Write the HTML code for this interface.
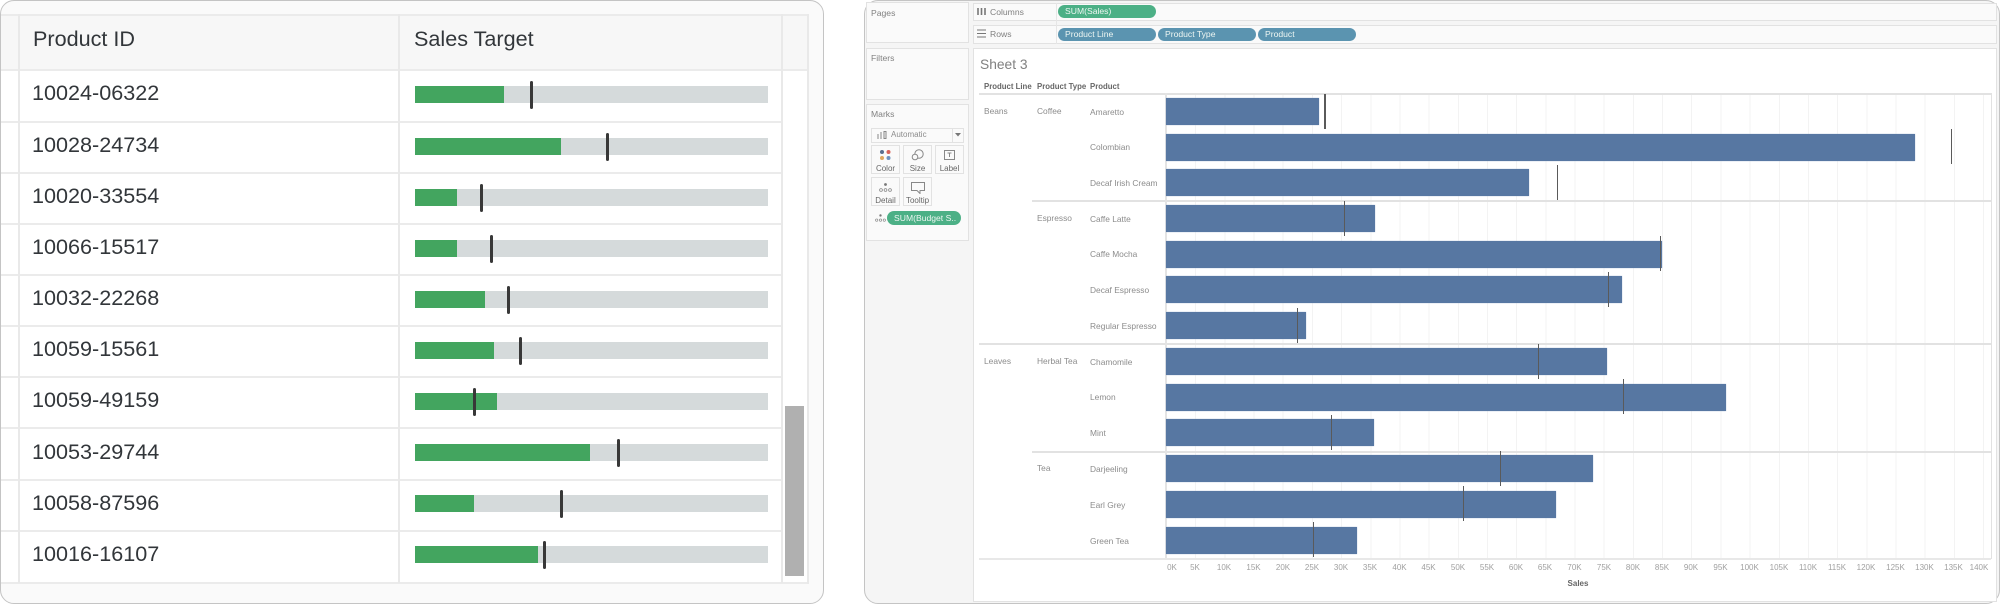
<!DOCTYPE html>
<html><head><meta charset="utf-8"><title>Bullet charts</title>
<style>
html,body{margin:0;padding:0;background:#fff}
#p{position:relative;width:2000px;height:604px;overflow:hidden;background:#fff;font-family:"Liberation Sans",sans-serif}
#p div{position:absolute;box-sizing:border-box;white-space:nowrap}
#p svg{position:absolute}
.h{height:2px;background:#ebebeb}
.v{width:2px;background:#e9e9e9}
.id{left:32px;width:200px;height:30px;line-height:30px;font-size:21.6px;color:#32363a}
.tr{left:415px;width:353px;height:17px;background:#d5dadb}
.g{left:415px;height:17px;background:#43a55f}
.m{width:3px;height:28px;background:#383838;border-radius:1.5px}
.box{background:#fafafa;border:1px solid #e2e2e2}
.lb{font-size:8.6px;color:#808080;height:12px;line-height:12px}
.pill{height:13px;line-height:13px;border-radius:7px;color:#eef6f2;font-size:8.6px;padding-left:7px;overflow:hidden}
.pb{background:#5b94b0;top:28px;width:98px}
.card{background:#fafafa;border:1px solid #e2e2e2;width:29px;height:29px}
.ct{left:0;width:100%;text-align:center;font-size:8px;color:#666;top:17px;height:11px;line-height:11px}
.c{font-size:8.4px;color:#8c8c8c;height:12px;line-height:12px}
.b{left:1166px;height:27px;background:#5777a2;box-shadow:0 0 1px #9fb3cf}
.k{width:1.5px;height:35px;background:#5a5a5a}
.ch{font-size:7.8px;font-weight:bold;color:#666;height:12px;line-height:12px;top:81px}
.x{top:562px;width:40px;text-align:center;font-size:8px;color:#a0a0a0;height:12px;line-height:12px}
.l{height:1.5px;background:#e2e2e2}
</style></head><body><div id="p">

<!-- LEFT PANEL -->
<div style="left:0;top:0;width:824px;height:604px;background:#fafafa;border:1px solid #c4c4c4;border-radius:14px"></div>
<div style="left:1px;top:14px;width:808px;height:56px;background:#f7f7f7"></div>
<div style="left:1px;top:70px;width:808px;height:514px;background:#fff"></div>
<div class="h" style="left:1px;top:14px;width:808px"></div>
<div class="h" style="left:1px;top:69px;width:808px"></div>
<div class="h" style="left:1px;top:120.5px;width:780px"></div>
<div class="h" style="left:1px;top:171.5px;width:780px"></div>
<div class="h" style="left:1px;top:222.5px;width:780px"></div>
<div class="h" style="left:1px;top:274px;width:780px"></div>
<div class="h" style="left:1px;top:325px;width:780px"></div>
<div class="h" style="left:1px;top:376px;width:780px"></div>
<div class="h" style="left:1px;top:427px;width:780px"></div>
<div class="h" style="left:1px;top:478.5px;width:780px"></div>
<div class="h" style="left:1px;top:529.5px;width:780px"></div>
<div class="h" style="left:1px;top:582px;width:808px"></div>
<div class="v" style="left:18px;top:14px;height:569px"></div>
<div class="v" style="left:398px;top:14px;height:569px"></div>
<div class="v" style="left:780.5px;top:14px;height:569px"></div>
<div class="v" style="left:807px;top:14px;height:570px"></div>
<div style="left:785px;top:406px;width:19px;height:170px;background:#b0b0b0"></div>

<div style="left:33px;top:24px;height:30px;line-height:30px;font-size:21.6px;color:#32363a">Product ID</div>
<div style="left:414px;top:24px;height:30px;line-height:30px;font-size:21.6px;color:#32363a">Sales Target</div>

<div class="id" style="top:78px">10024-06322</div>
<div class="id" style="top:129.5px">10028-24734</div>
<div class="id" style="top:180.5px">10020-33554</div>
<div class="id" style="top:231.5px">10066-15517</div>
<div class="id" style="top:283px">10032-22268</div>
<div class="id" style="top:334px">10059-15561</div>
<div class="id" style="top:385px">10059-49159</div>
<div class="id" style="top:436.5px">10053-29744</div>
<div class="id" style="top:487.5px">10058-87596</div>
<div class="id" style="top:538.5px">10016-16107</div>

<div class="tr" style="top:86px"></div><div class="g" style="top:86px;width:89px"></div><div class="m" style="left:530px;top:81px"></div>
<div class="tr" style="top:137.5px"></div><div class="g" style="top:137.5px;width:146px"></div><div class="m" style="left:606px;top:132.5px"></div>
<div class="tr" style="top:189px"></div><div class="g" style="top:189px;width:42px"></div><div class="m" style="left:480px;top:184px"></div>
<div class="tr" style="top:240px"></div><div class="g" style="top:240px;width:42px"></div><div class="m" style="left:490px;top:235px"></div>
<div class="tr" style="top:291px"></div><div class="g" style="top:291px;width:70px"></div><div class="m" style="left:507px;top:286px"></div>
<div class="tr" style="top:342px"></div><div class="g" style="top:342px;width:79px"></div><div class="m" style="left:519px;top:337px"></div>
<div class="tr" style="top:393px"></div><div class="g" style="top:393px;width:82px"></div><div class="m" style="left:472.5px;top:388px"></div>
<div class="tr" style="top:444px"></div><div class="g" style="top:444px;width:175px"></div><div class="m" style="left:616.5px;top:439px"></div>
<div class="tr" style="top:495px"></div><div class="g" style="top:495px;width:59px"></div><div class="m" style="left:559.5px;top:490px"></div>
<div class="tr" style="top:546px"></div><div class="g" style="top:546px;width:123px"></div><div class="m" style="left:542.5px;top:541px"></div>

<!-- RIGHT PANEL -->
<div style="left:864px;top:0;width:1136px;height:604px;background:#f5f5f5;border:1px solid #c4c4c4;border-radius:14px"></div>
<div class="box" style="left:866px;top:2px;width:103px;height:41px"></div>
<div class="lb" style="left:871px;top:6.5px">Pages</div>
<div class="box" style="left:866px;top:48px;width:103px;height:52px"></div>
<div class="lb" style="left:871px;top:52px">Filters</div>
<div class="box" style="left:866px;top:104px;width:103px;height:137px"></div>
<div class="lb" style="left:871px;top:108px">Marks</div>

<div class="box" style="left:973px;top:3px;width:1024px;height:18px"></div>
<div class="box" style="left:973px;top:25px;width:1024px;height:19px"></div>
<div style="left:1056px;top:3px;width:1px;height:41px;background:#e6e6e6"></div>
<svg style="left:977px;top:7px" width="9" height="9" viewBox="0 0 9 9"><path d="M1 1v7M4.5 1v7M8 1v7" stroke="#777" stroke-width="1.6" fill="none"/></svg>
<svg style="left:977px;top:29px" width="9" height="9" viewBox="0 0 9 9"><path d="M0 1h9M0 4.5h9M0 8h9" stroke="#777" stroke-width="1.1" fill="none"/></svg>
<div class="lb" style="left:990px;top:6px">Columns</div>
<div class="lb" style="left:990px;top:28px">Rows</div>
<div class="pill" style="left:1058px;top:5px;width:98px;background:#4cb086">SUM(Sales)</div>
<div class="pill pb" style="left:1058px">Product Line</div>
<div class="pill pb" style="left:1158px">Product Type</div>
<div class="pill pb" style="left:1258px">Product</div>

<!-- Marks card -->
<div style="left:871px;top:127.5px;width:93px;height:15px;background:#fafafa;border:1px solid #e2e2e2"></div>
<div style="left:952px;top:128px;width:1px;height:14px;background:#e2e2e2"></div>
<svg style="left:877px;top:131px" width="10" height="8" viewBox="0 0 10 8"><path d="M1 3v5M4 1v7M7 0.5h2v7H7z" stroke="#888" stroke-width="1" fill="none"/></svg>
<div class="lb" style="left:891px;top:129px;color:#8c8c8c;font-size:8px">Automatic</div>
<svg style="left:955px;top:133px" width="6" height="4" viewBox="0 0 6 4"><path d="M0 0h6L3 3.5z" fill="#777"/></svg>

<div class="card" style="left:871px;top:145px"><div class="ct">Color</div></div>
<svg style="left:879px;top:149px" width="13" height="12" viewBox="0 0 13 12"><circle cx="3" cy="3" r="2" fill="#5a6f8f"/><circle cx="9.5" cy="3" r="2" fill="#d9635a"/><circle cx="3" cy="9" r="2" fill="#e0a860"/><circle cx="9.5" cy="9" r="2" fill="#6f93c0"/></svg>
<div class="card" style="left:903px;top:145px"><div class="ct">Size</div></div>
<svg style="left:911px;top:149px" width="14" height="12" viewBox="0 0 14 12"><circle cx="8" cy="5" r="4.2" fill="none" stroke="#888"/><circle cx="4" cy="8" r="2.8" fill="#fafafa" stroke="#888"/></svg>
<div class="card" style="left:935px;top:145px"><div class="ct">Label</div></div>
<svg style="left:944px;top:150px" width="11" height="10" viewBox="0 0 11 10"><rect x=".5" y=".5" width="10" height="9" fill="none" stroke="#888"/><path d="M3.5 3h4M5.5 3v4" stroke="#888" fill="none"/></svg>
<div class="card" style="left:871px;top:177px"><div class="ct">Detail</div></div>
<svg style="left:879px;top:183px" width="13" height="9" viewBox="0 0 13 9"><circle cx="6.5" cy="1.5" r="1.4" fill="#777"/><circle cx="2" cy="7" r="1.4" fill="none" stroke="#888" stroke-width=".8"/><circle cx="6.5" cy="7" r="1.4" fill="none" stroke="#888" stroke-width=".8"/><circle cx="11" cy="7" r="1.4" fill="none" stroke="#888" stroke-width=".8"/></svg>
<div class="card" style="left:903px;top:177px"><div class="ct">Tooltip</div></div>
<svg style="left:911px;top:182px" width="14" height="12" viewBox="0 0 14 12"><path d="M.5.5h13v8H9v3l-3-3H.5z" fill="none" stroke="#888"/></svg>
<svg style="left:875px;top:214px" width="11" height="8" viewBox="0 0 13 9"><circle cx="6.5" cy="1.5" r="1.4" fill="#777"/><circle cx="2" cy="7" r="1.4" fill="none" stroke="#888" stroke-width=".8"/><circle cx="6.5" cy="7" r="1.4" fill="none" stroke="#888" stroke-width=".8"/><circle cx="11" cy="7" r="1.4" fill="none" stroke="#888" stroke-width=".8"/></svg>
<div class="pill" style="left:887px;top:211px;width:74px;height:14px;line-height:14px;background:#4cb086">SUM(Budget S..</div>

<!-- Chart -->
<div style="left:973px;top:48px;width:1024px;height:554px;background:#fff;border:1px solid #e2e2e2"></div>
<div style="left:980px;top:56px;height:18px;line-height:18px;font-size:13.8px;color:#808080">Sheet 3</div>
<div class="ch" style="left:984px">Product Line</div>
<div class="ch" style="left:1037px">Product Type</div>
<div class="ch" style="left:1090px">Product</div>

<div style="left:1166px;top:94px;width:825px;height:464px;background:repeating-linear-gradient(to right,#f3f3f3 0,#f3f3f3 1px,transparent 1px,transparent 29.18px)"></div>
<div class="l" style="left:979px;top:93px;width:1012px"></div>
<div class="l" style="left:1032px;top:200px;width:959px"></div>
<div class="l" style="left:979px;top:343px;width:1012px"></div>
<div class="l" style="left:1032px;top:451px;width:959px"></div>
<div class="l" style="left:979px;top:557.5px;width:1012px;height:2px;background:#e8e8e8"></div>
<div style="left:1165px;top:93px;width:1.5px;height:465px;background:#e4e4e4"></div>
<div style="left:1990.5px;top:93px;width:1.5px;height:466px;background:#e2e2e2"></div>

<div class="c" style="left:984px;top:105px">Beans</div>
<div class="c" style="left:984px;top:355px">Leaves</div>
<div class="c" style="left:1037px;top:105px">Coffee</div>
<div class="c" style="left:1037px;top:212px">Espresso</div>
<div class="c" style="left:1037px;top:355px">Herbal Tea</div>
<div class="c" style="left:1037px;top:462px">Tea</div>

<div class="c" style="left:1090px;top:105.5px">Amaretto</div>
<div class="c" style="left:1090px;top:141px">Colombian</div>
<div class="c" style="left:1090px;top:177px">Decaf Irish Cream</div>
<div class="c" style="left:1090px;top:212.5px">Caffe Latte</div>
<div class="c" style="left:1090px;top:248px">Caffe Mocha</div>
<div class="c" style="left:1090px;top:284px">Decaf Espresso</div>
<div class="c" style="left:1090px;top:320px">Regular Espresso</div>
<div class="c" style="left:1090px;top:356px">Chamomile</div>
<div class="c" style="left:1090px;top:391px">Lemon</div>
<div class="c" style="left:1090px;top:427px">Mint</div>
<div class="c" style="left:1090px;top:463px">Darjeeling</div>
<div class="c" style="left:1090px;top:498.5px">Earl Grey</div>
<div class="c" style="left:1090px;top:534.5px">Green Tea</div>

<div class="b" style="top:98px;width:153px"></div>
<div class="b" style="top:133.5px;width:749px"></div>
<div class="b" style="top:169px;width:363px"></div>
<div class="b" style="top:205px;width:209px"></div>
<div class="b" style="top:240.5px;width:495.5px"></div>
<div class="b" style="top:276px;width:456px"></div>
<div class="b" style="top:312px;width:140px"></div>
<div class="b" style="top:348px;width:441px"></div>
<div class="b" style="top:383.5px;width:560px"></div>
<div class="b" style="top:419px;width:208px"></div>
<div class="b" style="top:455px;width:427px"></div>
<div class="b" style="top:490.5px;width:390px"></div>
<div class="b" style="top:526.5px;width:191px"></div>

<div class="k" style="left:1324px;top:93.5px"></div>
<div class="k" style="left:1950.5px;top:129px"></div>
<div class="k" style="left:1556.5px;top:164.5px"></div>
<div class="k" style="left:1343.5px;top:200.5px"></div>
<div class="k" style="left:1659.5px;top:236px"></div>
<div class="k" style="left:1607.5px;top:271.5px"></div>
<div class="k" style="left:1296.5px;top:307.5px"></div>
<div class="k" style="left:1537.5px;top:344px"></div>
<div class="k" style="left:1622.5px;top:379px"></div>
<div class="k" style="left:1330.5px;top:414.5px"></div>
<div class="k" style="left:1499.5px;top:451px"></div>
<div class="k" style="left:1462.5px;top:486px"></div>
<div class="k" style="left:1312.5px;top:522px"></div>

<div class="x" style="left:1152px">0K</div>
<div class="x" style="left:1175px">5K</div>
<div class="x" style="left:1204px">10K</div>
<div class="x" style="left:1233.5px">15K</div>
<div class="x" style="left:1263px">20K</div>
<div class="x" style="left:1292px">25K</div>
<div class="x" style="left:1321px">30K</div>
<div class="x" style="left:1350px">35K</div>
<div class="x" style="left:1379.5px">40K</div>
<div class="x" style="left:1408.5px">45K</div>
<div class="x" style="left:1438px">50K</div>
<div class="x" style="left:1467px">55K</div>
<div class="x" style="left:1496px">60K</div>
<div class="x" style="left:1525px">65K</div>
<div class="x" style="left:1554.5px">70K</div>
<div class="x" style="left:1584px">75K</div>
<div class="x" style="left:1613px">80K</div>
<div class="x" style="left:1642px">85K</div>
<div class="x" style="left:1671px">90K</div>
<div class="x" style="left:1700.5px">95K</div>
<div class="x" style="left:1729.5px">100K</div>
<div class="x" style="left:1759px">105K</div>
<div class="x" style="left:1788px">110K</div>
<div class="x" style="left:1817px">115K</div>
<div class="x" style="left:1846px">120K</div>
<div class="x" style="left:1875.5px">125K</div>
<div class="x" style="left:1904.5px">130K</div>
<div class="x" style="left:1933.5px">135K</div>
<div class="x" style="left:1959px">140K</div>
<div style="left:1558px;top:578px;width:40px;text-align:center;font-size:8px;font-weight:bold;color:#666;height:12px;line-height:12px">Sales</div>

</div></body></html>
